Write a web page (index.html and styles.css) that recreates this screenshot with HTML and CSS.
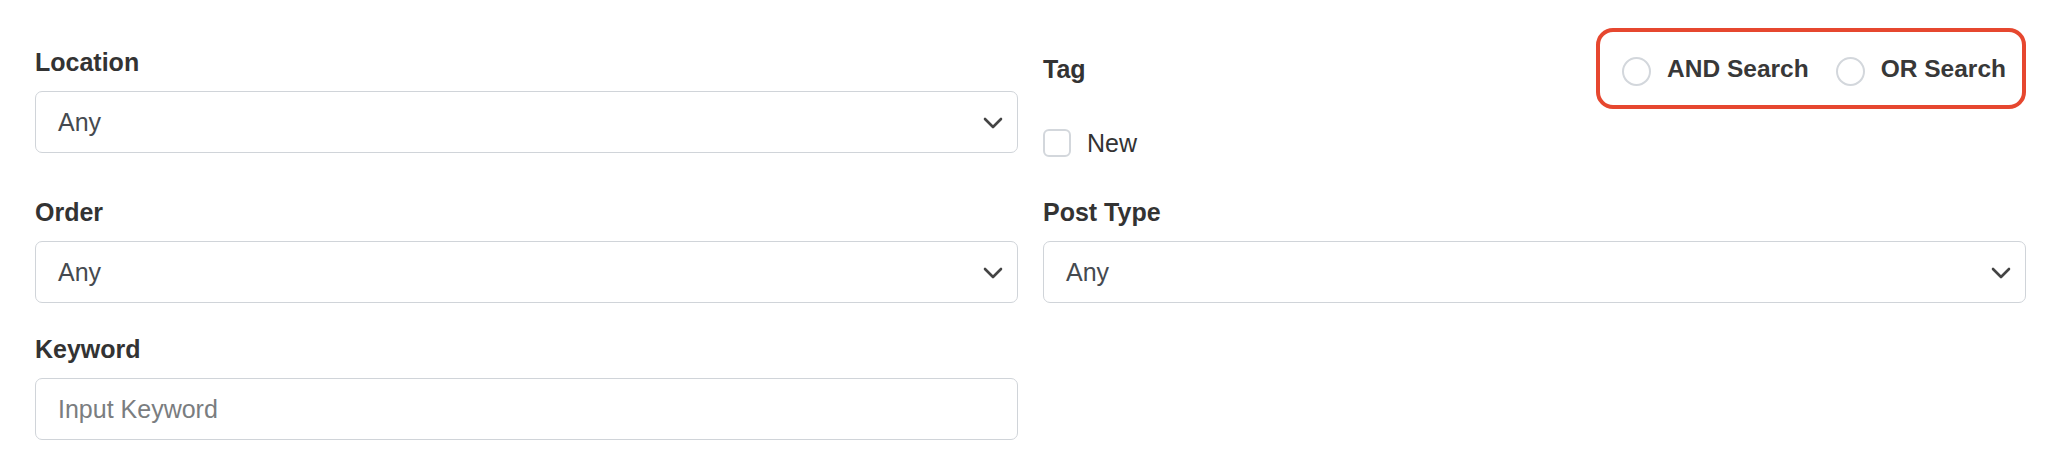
FILE: index.html
```html
<!DOCTYPE html>
<html lang="en">
<head>
<meta charset="utf-8">
<title>Search</title>
<link rel="stylesheet" href="styles.css">
</head>
<body>
<form class="search-form">
  <div class="field field-first">
    <div class="field-label">Location</div>
    <div class="select">
      <span class="select-value">Any</span>
      <svg class="chevron" width="20" height="12" viewBox="0 0 20 12"><path d="M2 2 L10 10 L18 2" fill="none" stroke="#444" stroke-width="2.6" stroke-linecap="round" stroke-linejoin="round"/></svg>
    </div>
  </div>

  <div class="field field-tag">
    <div class="tag-head">
      <div class="field-label">Tag</div>
      <div class="mode-box">
        <label class="mode"><span class="radio"></span><span class="mode-text">AND Search</span></label>
        <label class="mode"><span class="radio"></span><span class="mode-text">OR Search</span></label>
      </div>
    </div>
    <label class="check"><span class="check-box"></span><span class="check-text">New</span></label>
  </div>

  <div class="field">
    <div class="field-label">Order</div>
    <div class="select">
      <span class="select-value">Any</span>
      <svg class="chevron" width="20" height="12" viewBox="0 0 20 12"><path d="M2 2 L10 10 L18 2" fill="none" stroke="#444" stroke-width="2.6" stroke-linecap="round" stroke-linejoin="round"/></svg>
    </div>
  </div>

  <div class="field">
    <div class="field-label">Post Type</div>
    <div class="select">
      <span class="select-value">Any</span>
      <svg class="chevron" width="20" height="12" viewBox="0 0 20 12"><path d="M2 2 L10 10 L18 2" fill="none" stroke="#444" stroke-width="2.6" stroke-linecap="round" stroke-linejoin="round"/></svg>
    </div>
  </div>

  <div class="field">
    <div class="field-label">Keyword</div>
    <div class="input"><span class="placeholder">Input Keyword</span></div>
  </div>
</form>
</body>
</html>
```

FILE: styles.css
```css
* { box-sizing: border-box; }

body {
  margin: 0;
  background: #ffffff;
  font-family: "Liberation Sans", Arial, Helvetica, sans-serif;
  font-size: 25px;
  color: #333333;
}

.search-form {
  display: grid;
  grid-template-columns: 983px 983px;
  column-gap: 25px;
  row-gap: 31px;
  align-items: start;
  padding: 28px 22px 0 35px;
}

.field-first { padding-top: 19px; }

.field-label {
  font-weight: bold;
  line-height: 30px;
  color: #333333;
  margin-bottom: 14px;
}

.select,
.input {
  height: 62px;
  border: 1px solid #d0d4d9;
  border-radius: 7px;
  background: #ffffff;
  display: flex;
  align-items: center;
  justify-content: space-between;
  padding: 0 14px 0 22px;
}

.select-value {
  color: #454a50;
  line-height: 30px;
}

.chevron { display: block; margin-top: 1px; }

.placeholder {
  color: #7a7d80;
  line-height: 30px;
}

/* Tag column */
.tag-head {
  display: flex;
  align-items: center;
  justify-content: space-between;
}

.tag-head .field-label { margin-bottom: 0; }

.mode-box {
  display: flex;
  align-items: center;
  height: 81px;
  border: 4px solid #e6472f;
  border-radius: 17px;
  padding: 0 16px 0 22px;
  gap: 27px;
}

.mode {
  display: flex;
  align-items: center;
  gap: 16px;
}

.radio {
  width: 29px;
  height: 29px;
  border: 2px solid #d3d7dc;
  border-radius: 50%;
  margin-top: 5px;
  background: #ffffff;
}

.mode-text {
  font-weight: bold;
  line-height: 30px;
  color: #383838;
  font-size: 24.5px;
}

.check {
  display: flex;
  align-items: center;
  gap: 16px;
  margin-top: 20px;
  margin-bottom: 9px;
  height: 28px;
}

.check-box {
  width: 28px;
  height: 28px;
  border: 2px solid #d3d7dc;
  border-radius: 6px;
  background: #ffffff;
}

.check-text {
  line-height: 30px;
  color: #333333;
}
```
